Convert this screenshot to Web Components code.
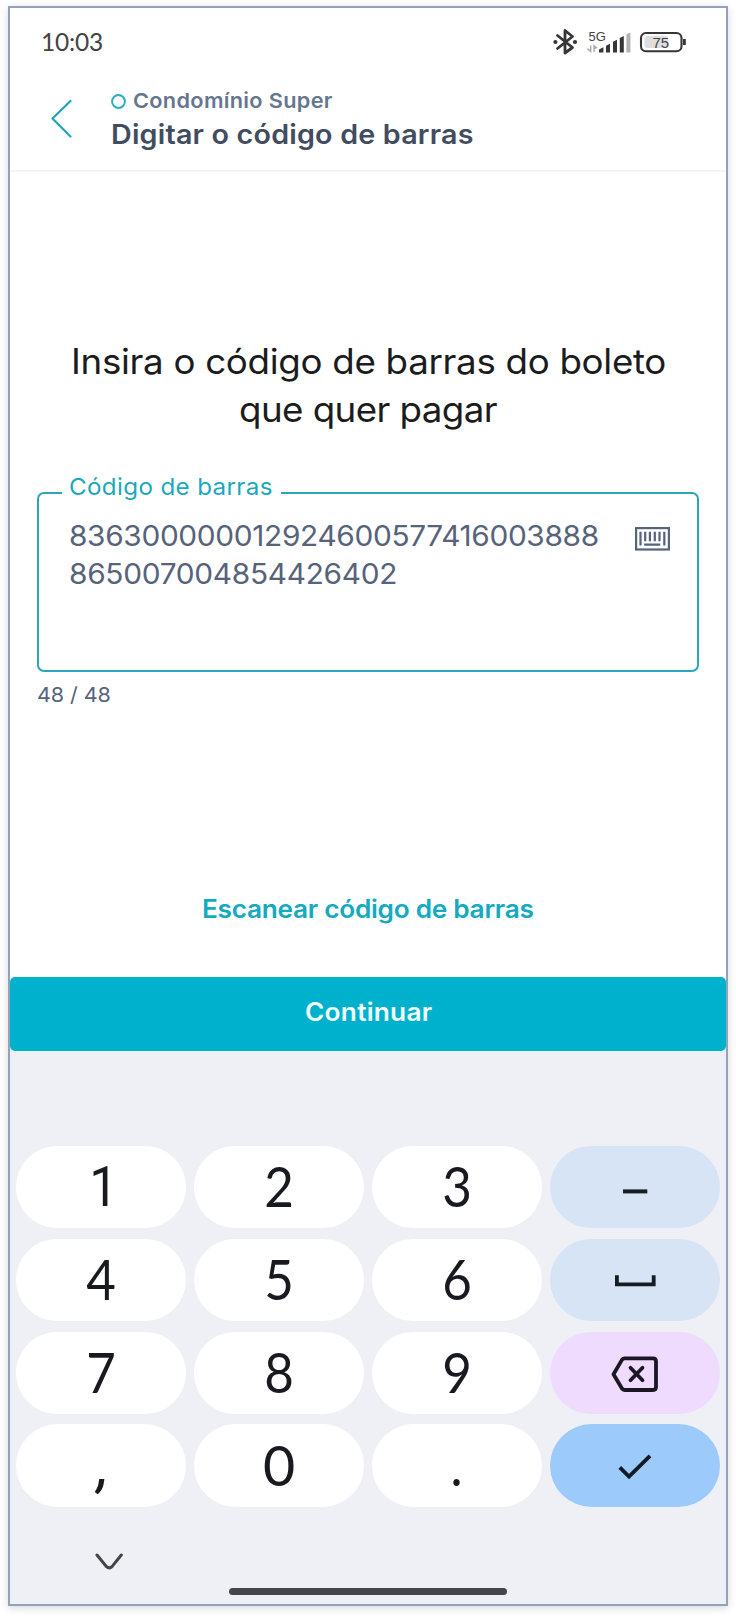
<!DOCTYPE html>
<html lang="pt-BR">
<head>
<meta charset="utf-8">
<title>Digitar o código de barras</title>
<style>
  body {
    margin: 0;
    padding: 6px 8px 10px;
    width: 720px;
    background: #fff;
    font-family: Inter, "Liberation Sans", sans-serif;
  }
</style>
</head>
<body>
<phone-frame>
  <status-bar time="10:03" network="5G" battery="75"></status-bar>
  <app-header>
    <fit-text slot="account" width="199">Condomínio Super</fit-text>
    <fit-text slot="title" width="362">Digitar o código de barras</fit-text>
  </app-header>
  <page-heading>
    <fit-text width="595">Insira o código de barras do boleto</fit-text>
    <fit-text width="259">que quer pagar</fit-text>
  </page-heading>
  <barcode-field>
    <fit-text slot="label" width="204">Código de barras</fit-text>
    <fit-text width="530">836300000012924600577416003888</fit-text>
    <fit-text width="328">865007004854426402</fit-text>
    <fit-text slot="counter" width="74">48 / 48</fit-text>
  </barcode-field>
  <action-link><fit-text width="332">Escanear código de barras</fit-text></action-link>
  <primary-button><fit-text width="127">Continuar</fit-text></primary-button>
  <num-pad></num-pad>
</phone-frame>

<script>
function attach(el, html) {
  const template = document.createElement('template');
  template.innerHTML = html;
  el.attachShadow({ mode: 'open' }).appendChild(template.content.cloneNode(true));
}

class PhoneFrame extends HTMLElement {
  constructor() {
    super();
    attach(this, `
      <style>
        :host {
          display: flex;
          flex-direction: column;
          box-sizing: border-box;
          width: 720px;
          height: 1600px;
          border: 2px solid #92a2bb;
          background: #fff;
          box-shadow: 0 2px 8px rgba(0, 0, 0, 0.16);
        }
      </style>
      <slot></slot>
    `);
  }
}

// one line of text, slightly widened and letter-spaced to fill the given width
const STRETCH = 1.05;

class FitText extends HTMLElement {
  constructor() {
    super();
    attach(this, `
      <style>
        :host { display: inline-block; white-space: nowrap; text-align: left; }
        span { display: inline-block; transform-origin: 0 50%; transform: scaleX(${STRETCH}); }
      </style>
      <span><slot></slot></span>
    `);
  }

  connectedCallback() {
    requestAnimationFrame(() => this.fit());
    this.fit();
  }

  fit() {
    const span = this.shadowRoot.querySelector('span');
    const width = Number(this.getAttribute('width'));
    this.style.width = width + 'px';
    span.style.letterSpacing = '0px';
    span.style.marginRight = '0px';
    const natural = span.offsetWidth;
    const count = this.textContent.length;
    if (!natural || count < 2) return;
    const gap = (width / STRETCH - natural) / (count - 1);
    span.style.letterSpacing = gap + 'px';
    span.style.marginRight = -gap + 'px';
  }
}

class StatusBar extends HTMLElement {
  constructor() {
    super();
    attach(this, `
      <style>
        :host {
          display: flex;
          justify-content: space-between;
          height: 68px;
          padding: 0 39px 0 31px;
          font-family: "Liberation Sans", sans-serif;
          color: #444;
        }
        .time { font-family: Lato, sans-serif; font-size: 24.5px; letter-spacing: -0.2px; line-height: 67px; color: #444; }
        svg { display: block; margin-top: 17px; }
      </style>
      <span class="time"></span>
      <svg width="136" height="34" viewBox="551 25 136 34" fill="none">
        <path d="M557.5 35.5 L572.5 47.5 L565 53 V30.5 L572.5 36.5 L557.5 48.5" stroke="#363636" stroke-width="2.8" stroke-linejoin="round" stroke-linecap="round"/>
        <circle cx="555.4" cy="42" r="2.1" fill="#363636"/>
        <circle cx="575" cy="42" r="2.1" fill="#363636"/>
        <text class="net" x="588.5" y="41" font-size="13" fill="#444"></text>
        <path d="M590.7 45.5 V51.5 L587.4 48.6 M594 52 V45.7 L596.3 47.6 L594 49" stroke="#aaa" stroke-width="1.4"/>
        <path d="M599 52.5 V49.5 L603.4 47.2 V52.5Z M606 52.5 V45.8 L610 43.8 V52.5Z M613 52.5 V41.7 L617 39.8 V52.5Z M619.8 52.5 V38 L623.8 36 V52.5Z" fill="#363636"/>
        <path d="M626.4 52.5 V34.3 L630.4 32.5 V52.5Z" fill="#b2b2b2"/>
        <rect x="641" y="33" width="40.5" height="18.3" rx="5" stroke="#363636" stroke-width="2.1"/>
        <rect x="644.5" y="36" width="23.5" height="12" rx="2" fill="#dedede"/>
        <path d="M683 39 H685.8 V45 H683Z" fill="#363636"/>
        <text class="bat" x="652.5" y="47.5" font-size="15" fill="#444"></text>
      </svg>
    `);
    this.shadowRoot.querySelector('.time').textContent = this.getAttribute('time');
    this.shadowRoot.querySelector('.net').textContent = this.getAttribute('network');
    this.shadowRoot.querySelector('.bat').textContent = this.getAttribute('battery');
  }
}

class AppHeader extends HTMLElement {
  constructor() {
    super();
    attach(this, `
      <style>
        :host {
          display: flex;
          box-sizing: border-box;
          height: 96px;
          padding: 10px 0 0 41px;
          border-bottom: 2px solid #f5f5f6;
        }
        .back { display: block; margin: 13px 37.5px 0 0; }
        .account {
          display: flex;
          align-items: center;
          gap: 7px;
          height: 30px;
          font-size: 20.7px;
          font-weight: 600;
          line-height: 30px;
          color: #66768f;
        }
        .title {
          margin-top: 1px;
          height: 36px;
          font-size: 27.3px;
          font-weight: 600;
          line-height: 36px;
          color: #414c60;
        }
      </style>
      <svg class="back" width="22" height="40" viewBox="0 0 22 40" fill="none">
        <path d="M19.5 2 L1.5 19.5 L19.5 37.5" stroke="#1fa5bb" stroke-width="2.2" stroke-linecap="round" stroke-linejoin="round"/>
      </svg>
      <div>
        <div class="account">
          <svg width="15" height="15" viewBox="0 0 15 15" fill="none"><circle cx="7.5" cy="7.5" r="6.4" stroke="#28afc2" stroke-width="2"/></svg>
          <slot name="account"></slot>
        </div>
        <div class="title"><slot name="title"></slot></div>
      </div>
    `);
  }
}

class PageHeading extends HTMLElement {
  constructor() {
    super();
    attach(this, `
      <style>
        :host {
          display: flex;
          flex-direction: column;
          align-items: center;
          height: 96px;
          margin-top: 165px;
          font-size: 35px;
          font-weight: 400;
          line-height: 48px;
          color: #1b1c20;
        }
      </style>
      <slot></slot>
    `);
  }
}

class BarcodeField extends HTMLElement {
  constructor() {
    super();
    attach(this, `
      <style>
        :host { display: block; margin: 40px 27px 0; color: #56637a; }
        fieldset {
          box-sizing: border-box;
          height: 199px;
          margin: 0;
          padding: 0 27px 0 30px;
          border: 2px solid #2aa6b9;
          border-radius: 7px;
          min-width: 0;
        }
        legend {
          margin-left: -7px;
          padding: 0 8px 11px 7px;
          height: 28px;
          font-size: 23px;
          line-height: 28px;
          color: #1ba8bd;
        }
        .row { display: flex; justify-content: space-between; padding-top: 4.5px; }
        .value {
          display: flex;
          flex-direction: column;
          font-size: 28.4px;
          line-height: 38.6px;
        }
        svg { display: block; margin-top: 10px; }
        .counter { margin-top: 9px; height: 28px; font-size: 20.5px; line-height: 28px; }
      </style>
      <fieldset>
        <legend><slot name="label"></slot></legend>
        <div class="row">
          <div class="value"><slot></slot></div>
          <svg width="35" height="24" viewBox="0 0 35 24" fill="none" stroke="#56637a" stroke-width="2.2">
            <rect x="1.1" y="1.1" width="32.8" height="21.4"/>
            <path d="M5.5 4.8 V18.6 M29.3 4.8 V18.6 M10.2 4.8 V14.2 M14.9 4.8 V14.2 M19.8 4.8 V14.2 M24.5 4.8 V14.2 M9.2 17.6 H25.2"/>
          </svg>
        </div>
      </fieldset>
      <div class="counter"><slot name="counter"></slot></div>
    `);
  }
}

class ActionLink extends HTMLElement {
  constructor() {
    super();
    attach(this, `
      <style>
        :host {
          display: block;
          margin-top: auto;
          height: 34px;
          text-align: center;
          font-size: 25px;
          font-weight: 600;
          line-height: 34px;
          color: #14aac0;
        }
      </style>
      <slot></slot>
    `);
  }
}

class PrimaryButton extends HTMLElement {
  constructor() {
    super();
    attach(this, `
      <style>
        :host { display: block; margin-top: 51px; background: linear-gradient(#fff 50%, #eff0f6 50%); }
        button {
          display: block;
          width: 100%;
          height: 74px;
          padding: 0 0 5px;
          border: none;
          border-radius: 5px;
          background: #00b1ce;
          font: 600 25px Inter, sans-serif;
          color: #f1fcfe;
        }
      </style>
      <button><slot></slot></button>
    `);
  }
}

class PadKey extends HTMLElement {
  constructor() {
    super();
    attach(this, `
      <style>
        :host {
          display: flex;
          align-items: center;
          justify-content: center;
          box-sizing: border-box;
          padding-bottom: 2px;
          border-radius: 42px;
          background: #fff;
          color: #181a1f;
        }
        :host([tone]) { padding-bottom: 0; }
        :host([tone="soft"]) { background: #d6e4f6; }
        :host([tone="delete"]) { background: #eedbfe; }
        :host([tone="done"]) { background: #9ccafa; }
        :host([plain]) { font-family: Roboto, sans-serif; padding: 2px 0 0 5px; }
        :host([slant]) { font-style: italic; font-weight: 500; }
        span { display: block; transform: scaleX(0.92); }
        :host([tone]) span, :host([wide]) span { transform: none; }
        ::slotted(svg) { display: block; }
      </style>
      <span><slot></slot></span>
    `);
  }
}

class NumPad extends HTMLElement {
  constructor() {
    super();
    attach(this, `
      <style>
        :host {
          display: flex;
          flex-direction: column;
          box-sizing: border-box;
          height: 553px;
          padding: 95px 6px 0;
          background: #eff0f6;
          font-family: Lato, sans-serif;
          font-size: 55.5px;
          line-height: 82px;
        }
        .keys {
          display: grid;
          grid-template-columns: repeat(4, 170px);
          grid-auto-rows: 82.4px;
          gap: 10.4px 8px;
        }
        .hide { display: block; margin: 46px 0 0 79px; }
        .home {
          width: 278px;
          height: 7px;
          margin: 17px 0 0 213px;
          border-radius: 3.5px;
          background: #444649;
        }
      </style>
      <div class="keys">
        <pad-key plain>1</pad-key>
        <pad-key>2</pad-key>
        <pad-key>3</pad-key>
        <pad-key tone="soft">
          <svg width="44" height="40" viewBox="0 0 44 40"><path d="M10 24.4 H34.3" stroke="#171b22" stroke-width="4"/></svg>
        </pad-key>
        <pad-key>4</pad-key>
        <pad-key>5</pad-key>
        <pad-key>6</pad-key>
        <pad-key tone="soft">
          <svg width="44" height="40" viewBox="0 0 44 40" fill="none"><path d="M3.9 15.2 V24.3 H40.7 V15.2" stroke="#171b22" stroke-width="3.8"/></svg>
        </pad-key>
        <pad-key>7</pad-key>
        <pad-key>8</pad-key>
        <pad-key>9</pad-key>
        <pad-key tone="delete">
          <svg width="56" height="40" viewBox="0 0 56 40" fill="none" stroke="#1c1823" stroke-width="3.8" stroke-linejoin="round">
            <path d="M17.5 5.3 H46 Q49 5.3 49 8.3 V34 Q49 37 46 37 H17.5 Q16 37 15.1 35.7 L6.5 21.2 L15.1 6.6 Q16 5.3 17.5 5.3Z"/>
            <path d="M23.5 14.8 L35.5 27.2 M35.5 14.8 L23.5 27.2" stroke-linecap="round"/>
          </svg>
        </pad-key>
        <pad-key plain slant>,</pad-key>
        <pad-key wide>0</pad-key>
        <pad-key>.</pad-key>
        <pad-key tone="done">
          <svg width="44" height="40" viewBox="0 0 44 40" fill="none"><path d="M6.8 21.3 L16 30.5 L37 9.8" stroke="#131a24" stroke-width="3.8"/></svg>
        </pad-key>
      </div>
      <svg class="hide" width="30" height="18" viewBox="0 0 30 18" fill="none">
        <path d="M2 2 L11.5 13.6 Q14.3 16.2 17 13.6 L26.3 2" stroke="#444" stroke-width="3" stroke-linecap="round"/>
      </svg>
      <div class="home"></div>
    `);
  }
}

window.customElements.define('phone-frame', PhoneFrame);
window.customElements.define('status-bar', StatusBar);
window.customElements.define('app-header', AppHeader);
window.customElements.define('page-heading', PageHeading);
window.customElements.define('barcode-field', BarcodeField);
window.customElements.define('action-link', ActionLink);
window.customElements.define('primary-button', PrimaryButton);
window.customElements.define('pad-key', PadKey);
window.customElements.define('num-pad', NumPad);
window.customElements.define('fit-text', FitText);
</script>
</body>
</html>
